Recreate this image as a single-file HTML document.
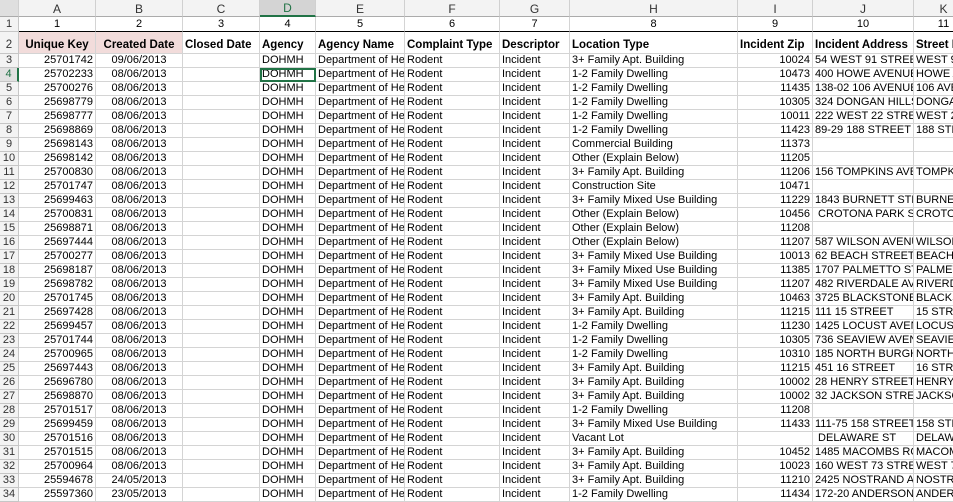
<!DOCTYPE html>
<html><head><meta charset="utf-8"><style>
body{margin:0;background:#fff;overflow:hidden;width:953px;height:492px}
table{border-collapse:separate;border-spacing:0;table-layout:fixed;width:974px;font-family:"Liberation Sans",sans-serif;font-size:11px;color:#000}
td{border-right:1px solid #d4d4d4;border-bottom:1px solid #d4d4d4;padding:0 2px;white-space:nowrap;overflow:hidden;box-sizing:border-box;line-height:13px;vertical-align:bottom;max-width:0}
tr{height:14px}
td.h{background:#f3f3f3;color:#333;text-align:center;border-right:1px solid #c6c6c6;border-bottom:1px solid #c6c6c6;padding:0}
tr.ch td{background:#f3f3f3;color:#333;text-align:center;border-right:1px solid #d0d0d0;border-bottom:1px solid #ababab;font-size:12px}
tr.ch{height:17px}
tr.r1{height:15px}
tr.r1 td{text-align:center;border-bottom:1px solid #000}
tr.r1 td.h{border-bottom:1px solid #c6c6c6}
tr.r2{height:22px}
tr.r2 td{font-weight:bold;font-size:11.5px;line-height:14px;padding-bottom:1px}
.pk{background:#f2dcdb}
.r{text-align:right}.c{text-align:center}
.sel{outline:2px solid #217346;outline-offset:-2px}
</style></head><body>
<table>
<colgroup><col style="width:19px"><col style="width:77px"><col style="width:87px"><col style="width:77px"><col style="width:56px"><col style="width:89px"><col style="width:95px"><col style="width:70px"><col style="width:168px"><col style="width:75px"><col style="width:101px"><col style="width:60px"></colgroup>
<tr class="ch"><td style="background:#dfdfdf"></td><td>A</td><td>B</td><td>C</td><td style="background:#d4d4d4;border-bottom:2px solid #217346;color:#217346">D</td><td>E</td><td>F</td><td>G</td><td>H</td><td>I</td><td>J</td><td>K</td></tr>
<tr class="r1"><td class="h">1</td><td>1</td><td>2</td><td>3</td><td>4</td><td>5</td><td>6</td><td>7</td><td>8</td><td>9</td><td>10</td><td>11</td></tr>
<tr class="r2"><td class="h" style="font-weight:normal">2</td><td class="pk c">Unique Key</td><td class="pk c">Created Date</td><td>Closed Date</td><td>Agency</td><td>Agency Name</td><td>Complaint Type</td><td>Descriptor</td><td>Location Type</td><td>Incident Zip</td><td>Incident Address</td><td>Street Name</td></tr>
<tr><td class="h">3</td><td class="r">25701742</td><td class="c">09/06/2013</td><td></td><td>DOHMH</td><td>Department of He</td><td>Rodent</td><td>Incident</td><td>3+ Family Apt. Building</td><td class="r">10024</td><td>54 WEST 91 STREET</td><td>WEST 91</td></tr>
<tr><td class="h" style="color:#217346;background:#e1e1e1;border-right:2px solid #217346">4</td><td class="r">25702233</td><td class="c">08/06/2013</td><td></td><td class="sel">DOHMH</td><td>Department of He</td><td>Rodent</td><td>Incident</td><td>1-2 Family Dwelling</td><td class="r">10473</td><td>400 HOWE AVENUE</td><td>HOWE AVE</td></tr>
<tr><td class="h">5</td><td class="r">25700276</td><td class="c">08/06/2013</td><td></td><td>DOHMH</td><td>Department of He</td><td>Rodent</td><td>Incident</td><td>1-2 Family Dwelling</td><td class="r">11435</td><td>138-02 106 AVENUE</td><td>106 AVE</td></tr>
<tr><td class="h">6</td><td class="r">25698779</td><td class="c">08/06/2013</td><td></td><td>DOHMH</td><td>Department of He</td><td>Rodent</td><td>Incident</td><td>1-2 Family Dwelling</td><td class="r">10305</td><td>324 DONGAN HILLS</td><td>DONGAN</td></tr>
<tr><td class="h">7</td><td class="r">25698777</td><td class="c">08/06/2013</td><td></td><td>DOHMH</td><td>Department of He</td><td>Rodent</td><td>Incident</td><td>1-2 Family Dwelling</td><td class="r">10011</td><td>222 WEST 22 STREET</td><td>WEST 22</td></tr>
<tr><td class="h">8</td><td class="r">25698869</td><td class="c">08/06/2013</td><td></td><td>DOHMH</td><td>Department of He</td><td>Rodent</td><td>Incident</td><td>1-2 Family Dwelling</td><td class="r">11423</td><td>89-29 188 STREET</td><td>188 STR</td></tr>
<tr><td class="h">9</td><td class="r">25698143</td><td class="c">08/06/2013</td><td></td><td>DOHMH</td><td>Department of He</td><td>Rodent</td><td>Incident</td><td>Commercial Building</td><td class="r">11373</td><td></td><td></td></tr>
<tr><td class="h">10</td><td class="r">25698142</td><td class="c">08/06/2013</td><td></td><td>DOHMH</td><td>Department of He</td><td>Rodent</td><td>Incident</td><td>Other (Explain Below)</td><td class="r">11205</td><td></td><td></td></tr>
<tr><td class="h">11</td><td class="r">25700830</td><td class="c">08/06/2013</td><td></td><td>DOHMH</td><td>Department of He</td><td>Rodent</td><td>Incident</td><td>3+ Family Apt. Building</td><td class="r">11206</td><td>156 TOMPKINS AVENUE</td><td>TOMPKINS</td></tr>
<tr><td class="h">12</td><td class="r">25701747</td><td class="c">08/06/2013</td><td></td><td>DOHMH</td><td>Department of He</td><td>Rodent</td><td>Incident</td><td>Construction Site</td><td class="r">10471</td><td></td><td></td></tr>
<tr><td class="h">13</td><td class="r">25699463</td><td class="c">08/06/2013</td><td></td><td>DOHMH</td><td>Department of He</td><td>Rodent</td><td>Incident</td><td>3+ Family Mixed Use Building</td><td class="r">11229</td><td>1843 BURNETT STREET</td><td>BURNETT</td></tr>
<tr><td class="h">14</td><td class="r">25700831</td><td class="c">08/06/2013</td><td></td><td>DOHMH</td><td>Department of He</td><td>Rodent</td><td>Incident</td><td>Other (Explain Below)</td><td class="r">10456</td><td>&nbsp;CROTONA PARK SOUTH</td><td>CROTONA</td></tr>
<tr><td class="h">15</td><td class="r">25698871</td><td class="c">08/06/2013</td><td></td><td>DOHMH</td><td>Department of He</td><td>Rodent</td><td>Incident</td><td>Other (Explain Below)</td><td class="r">11208</td><td></td><td></td></tr>
<tr><td class="h">16</td><td class="r">25697444</td><td class="c">08/06/2013</td><td></td><td>DOHMH</td><td>Department of He</td><td>Rodent</td><td>Incident</td><td>Other (Explain Below)</td><td class="r">11207</td><td>587 WILSON AVENUE</td><td>WILSON</td></tr>
<tr><td class="h">17</td><td class="r">25700277</td><td class="c">08/06/2013</td><td></td><td>DOHMH</td><td>Department of He</td><td>Rodent</td><td>Incident</td><td>3+ Family Mixed Use Building</td><td class="r">10013</td><td>62 BEACH STREET</td><td>BEACH</td></tr>
<tr><td class="h">18</td><td class="r">25698187</td><td class="c">08/06/2013</td><td></td><td>DOHMH</td><td>Department of He</td><td>Rodent</td><td>Incident</td><td>3+ Family Mixed Use Building</td><td class="r">11385</td><td>1707 PALMETTO STREET</td><td>PALMETTO</td></tr>
<tr><td class="h">19</td><td class="r">25698782</td><td class="c">08/06/2013</td><td></td><td>DOHMH</td><td>Department of He</td><td>Rodent</td><td>Incident</td><td>3+ Family Mixed Use Building</td><td class="r">11207</td><td>482 RIVERDALE AVENUE</td><td>RIVERDALE</td></tr>
<tr><td class="h">20</td><td class="r">25701745</td><td class="c">08/06/2013</td><td></td><td>DOHMH</td><td>Department of He</td><td>Rodent</td><td>Incident</td><td>3+ Family Apt. Building</td><td class="r">10463</td><td>3725 BLACKSTONE AVENUE</td><td>BLACKSTONE</td></tr>
<tr><td class="h">21</td><td class="r">25697428</td><td class="c">08/06/2013</td><td></td><td>DOHMH</td><td>Department of He</td><td>Rodent</td><td>Incident</td><td>3+ Family Apt. Building</td><td class="r">11215</td><td>111 15 STREET</td><td>15 STREET</td></tr>
<tr><td class="h">22</td><td class="r">25699457</td><td class="c">08/06/2013</td><td></td><td>DOHMH</td><td>Department of He</td><td>Rodent</td><td>Incident</td><td>1-2 Family Dwelling</td><td class="r">11230</td><td>1425 LOCUST AVENUE</td><td>LOCUST</td></tr>
<tr><td class="h">23</td><td class="r">25701744</td><td class="c">08/06/2013</td><td></td><td>DOHMH</td><td>Department of He</td><td>Rodent</td><td>Incident</td><td>1-2 Family Dwelling</td><td class="r">10305</td><td>736 SEAVIEW AVENUE</td><td>SEAVIEW</td></tr>
<tr><td class="h">24</td><td class="r">25700965</td><td class="c">08/06/2013</td><td></td><td>DOHMH</td><td>Department of He</td><td>Rodent</td><td>Incident</td><td>1-2 Family Dwelling</td><td class="r">10310</td><td>185 NORTH BURGHER</td><td>NORTH</td></tr>
<tr><td class="h">25</td><td class="r">25697443</td><td class="c">08/06/2013</td><td></td><td>DOHMH</td><td>Department of He</td><td>Rodent</td><td>Incident</td><td>3+ Family Apt. Building</td><td class="r">11215</td><td>451 16 STREET</td><td>16 STREET</td></tr>
<tr><td class="h">26</td><td class="r">25696780</td><td class="c">08/06/2013</td><td></td><td>DOHMH</td><td>Department of He</td><td>Rodent</td><td>Incident</td><td>3+ Family Apt. Building</td><td class="r">10002</td><td>28 HENRY STREET</td><td>HENRY</td></tr>
<tr><td class="h">27</td><td class="r">25698870</td><td class="c">08/06/2013</td><td></td><td>DOHMH</td><td>Department of He</td><td>Rodent</td><td>Incident</td><td>3+ Family Apt. Building</td><td class="r">10002</td><td>32 JACKSON STREET</td><td>JACKSON</td></tr>
<tr><td class="h">28</td><td class="r">25701517</td><td class="c">08/06/2013</td><td></td><td>DOHMH</td><td>Department of He</td><td>Rodent</td><td>Incident</td><td>1-2 Family Dwelling</td><td class="r">11208</td><td></td><td></td></tr>
<tr><td class="h">29</td><td class="r">25699459</td><td class="c">08/06/2013</td><td></td><td>DOHMH</td><td>Department of He</td><td>Rodent</td><td>Incident</td><td>3+ Family Mixed Use Building</td><td class="r">11433</td><td>111-75 158 STREET</td><td>158 STREET</td></tr>
<tr><td class="h">30</td><td class="r">25701516</td><td class="c">08/06/2013</td><td></td><td>DOHMH</td><td>Department of He</td><td>Rodent</td><td>Incident</td><td>Vacant Lot</td><td class="r"></td><td>&nbsp;DELAWARE ST</td><td>DELAWARE</td></tr>
<tr><td class="h">31</td><td class="r">25701515</td><td class="c">08/06/2013</td><td></td><td>DOHMH</td><td>Department of He</td><td>Rodent</td><td>Incident</td><td>3+ Family Apt. Building</td><td class="r">10452</td><td>1485 MACOMBS ROAD</td><td>MACOMBS</td></tr>
<tr><td class="h">32</td><td class="r">25700964</td><td class="c">08/06/2013</td><td></td><td>DOHMH</td><td>Department of He</td><td>Rodent</td><td>Incident</td><td>3+ Family Apt. Building</td><td class="r">10023</td><td>160 WEST 73 STREET</td><td>WEST 73</td></tr>
<tr><td class="h">33</td><td class="r">25594678</td><td class="c">24/05/2013</td><td></td><td>DOHMH</td><td>Department of He</td><td>Rodent</td><td>Incident</td><td>3+ Family Apt. Building</td><td class="r">11210</td><td>2425 NOSTRAND AVENUE</td><td>NOSTRAND</td></tr>
<tr><td class="h">34</td><td class="r">25597360</td><td class="c">23/05/2013</td><td></td><td>DOHMH</td><td>Department of He</td><td>Rodent</td><td>Incident</td><td>1-2 Family Dwelling</td><td class="r">11434</td><td>172-20 ANDERSON</td><td>ANDERSON</td></tr>
</table>
</body></html>
